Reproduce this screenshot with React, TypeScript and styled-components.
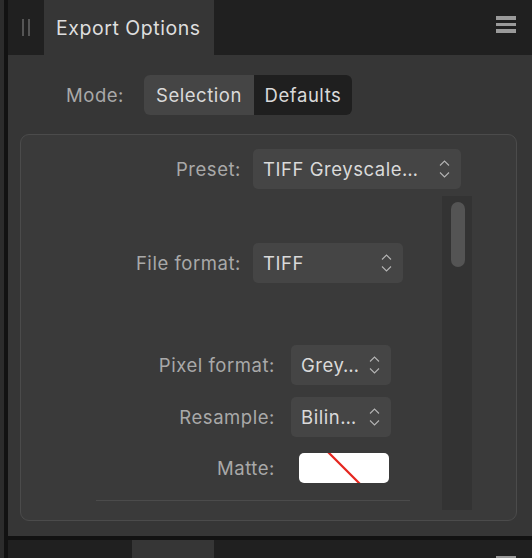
import React from "react"
import styled, { createGlobalStyle } from "styled-components"

const GlobalStyle = createGlobalStyle`
  html, body {
    margin: 0;
    padding: 0;
    background: #363636;
  }
  body {
    font-family: Inter, "Noto Sans", sans-serif;
    letter-spacing: 0.55px;
    -webkit-font-smoothing: antialiased;
  }
`

const Window = styled.div`
  width: 532px;
  height: 558px;
  display: flex;
  overflow: hidden;
`

const EdgeStrip = styled.div`
  width: 4px;
  background: #2c2c2c;
  border-right: 4px solid #121212;
`

const Main = styled.div`
  flex: 1;
  display: flex;
  flex-direction: column;
  min-width: 0;
`

const Header = styled.div<{ $height: number; $dark?: boolean }>`
  height: ${(p) => p.$height}px;
  flex: none;
  background: ${(p) => (p.$dark ? "#121212" : "#202020")};
  display: flex;
  align-items: stretch;
  overflow: hidden;
`

const Grip = styled.div<{ $width: number }>`
  width: ${(p) => p.$width}px;
  display: flex;
  align-items: center;
  justify-content: center;
  gap: 4px;
  & > span {
    width: 2px;
    height: 17px;
    background: #555;
  }
`

const Tab = styled.div<{ $width: number }>`
  width: ${(p) => p.$width}px;
  background: #363636;
  color: #dedede;
  font-size: 19.5px;
  display: flex;
  align-items: center;
  padding-left: 12px;
  box-sizing: border-box;
  white-space: nowrap;
`

const MenuButton = styled.div<{ $top: number }>`
  margin-left: auto;
  margin-right: 16px;
  padding-top: ${(p) => p.$top}px;
  display: flex;
  flex-direction: column;
  gap: 3px;
  & > span {
    width: 20px;
    height: 3.5px;
    background: #9a9a9a;
  }
`

const Body = styled.div`
  flex: 1;
  background: #363636;
  display: flex;
  flex-direction: column;
  padding: 20px 15px 15px 12px;
  min-height: 0;
`

const ModeRow = styled.div`
  display: flex;
  align-items: center;
  gap: 20px;
  padding-left: 46px;
  height: 40px;
`

const ModeLabel = styled.span`
  color: #a9a9a9;
  font-size: 18.5px;
`

const Segmented = styled.div`
  display: flex;
  border-radius: 6px;
  overflow: hidden;
  height: 40px;
`

const Segment = styled.div<{ $active?: boolean; $width: number }>`
  width: ${(p) => p.$width}px;
  background: ${(p) => (p.$active ? "#1f1f1f" : "#454545")};
  color: #dadada;
  font-size: 18.5px;
  display: flex;
  align-items: center;
  justify-content: center;
`

const Box = styled.div`
  margin-top: 19px;
  flex: 1;
  border: 1px solid #4b4b4b;
  border-radius: 9px;
  background: #3a3a3a;
  display: flex;
  flex-direction: column;
  padding-top: 14px;
  padding-bottom: 10px;
  min-height: 0;
`

const Row = styled.div<{ $labelWidth: number; $gap: number; $mt?: number }>`
  display: flex;
  align-items: center;
  height: 40px;
  flex: none;
  gap: ${(p) => p.$gap}px;
  margin-top: ${(p) => p.$mt ?? 0}px;
  & > label {
    width: ${(p) => p.$labelWidth}px;
    text-align: right;
    color: #a9a9a9;
    font-size: 18.5px;
    white-space: nowrap;
  }
`

const Select = styled.div<{ $width: number }>`
  width: ${(p) => p.$width}px;
  height: 40px;
  box-sizing: border-box;
  background: #454545;
  border-radius: 5px;
  display: flex;
  align-items: center;
  justify-content: space-between;
  padding: 0 11px 0 10px;
  color: #dadada;
  font-size: 18.5px;
  white-space: nowrap;
  overflow: hidden;
`

const ScrollArea = styled.div`
  margin-top: 7px;
  flex: 1;
  display: flex;
  min-height: 0;
`

const ScrollContent = styled.div`
  flex: 1;
  display: flex;
  flex-direction: column;
  overflow: hidden;
`

const ScrollTrack = styled.div`
  width: 30px;
  margin-right: 44px;
  background: #333333;
  padding: 6px 7px 0 9px;
  box-sizing: border-box;
  & > div {
    height: 65px;
    border-radius: 7px;
    background: #545454;
  }
`

const Swatch = styled.div`
  width: 90px;
  height: 30px;
  margin-left: 8px;
  border-radius: 5px;
  background: #fff;
  overflow: hidden;
  & > svg {
    display: block;
  }
`

const Separator = styled.div`
  height: 1px;
  background: #4b4b4b;
  margin: 12px 32px 0 75px;
  flex: none;
`

function Chevrons() {
  return (
    <svg width="11" height="22" viewBox="0 0 11 22" fill="none" stroke="#b4b4b4" strokeWidth="1.1">
      <polyline points="1,7.5 5.5,3 10,7.5" />
      <polyline points="1,14.5 5.5,19 10,14.5" />
    </svg>
  )
}

function Dropdown(props: { value: string; width: number }) {
  return (
    <Select $width={props.width}>
      <span>{props.value}</span>
      <Chevrons />
    </Select>
  )
}

export default function App() {
  return (
    <>
      <GlobalStyle />
      <Window>
        <EdgeStrip />
        <Main>
          <Header $height={55}>
            <Grip $width={36}>
              <span />
              <span />
            </Grip>
            <Tab $width={170}>Export Options</Tab>
            <MenuButton $top={16}>
              <span />
              <span />
              <span />
            </MenuButton>
          </Header>
          <Body>
            <ModeRow>
              <ModeLabel>Mode:</ModeLabel>
              <Segmented>
                <Segment $width={110}>Selection</Segment>
                <Segment $width={98} $active>
                  Defaults
                </Segment>
              </Segmented>
            </ModeRow>
            <Box>
              <Row $labelWidth={220} $gap={12}>
                <label>Preset:</label>
                <Dropdown value="TIFF Greyscale…" width={208} />
              </Row>
              <ScrollArea>
                <ScrollContent>
                  <Row $labelWidth={220} $gap={12} $mt={47}>
                    <label>File format:</label>
                    <Dropdown value="TIFF" width={150} />
                  </Row>
                  <Row $labelWidth={254} $gap={16} $mt={62}>
                    <label>Pixel format:</label>
                    <Dropdown value="Grey…" width={100} />
                  </Row>
                  <Row $labelWidth={254} $gap={16} $mt={12}>
                    <label>Resample:</label>
                    <Dropdown value="Bilin…" width={100} />
                  </Row>
                  <Row $labelWidth={254} $gap={16} $mt={11}>
                    <label>Matte:</label>
                    <Swatch>
                      <svg width="90" height="30" viewBox="0 0 90 30">
                        <line x1="29" y1="-1" x2="61" y2="31" stroke="#e5261f" strokeWidth="2.2" />
                      </svg>
                    </Swatch>
                  </Row>
                  <Separator />
                </ScrollContent>
                <ScrollTrack>
                  <div />
                </ScrollTrack>
              </ScrollArea>
            </Box>
          </Body>
          <Header $height={4} $dark />
          <Header $height={18}>
            <Grip $width={124} />
            <Tab $width={82} />
            <MenuButton $top={16}>
              <span />
            </MenuButton>
          </Header>
        </Main>
      </Window>
    </>
  )
}
